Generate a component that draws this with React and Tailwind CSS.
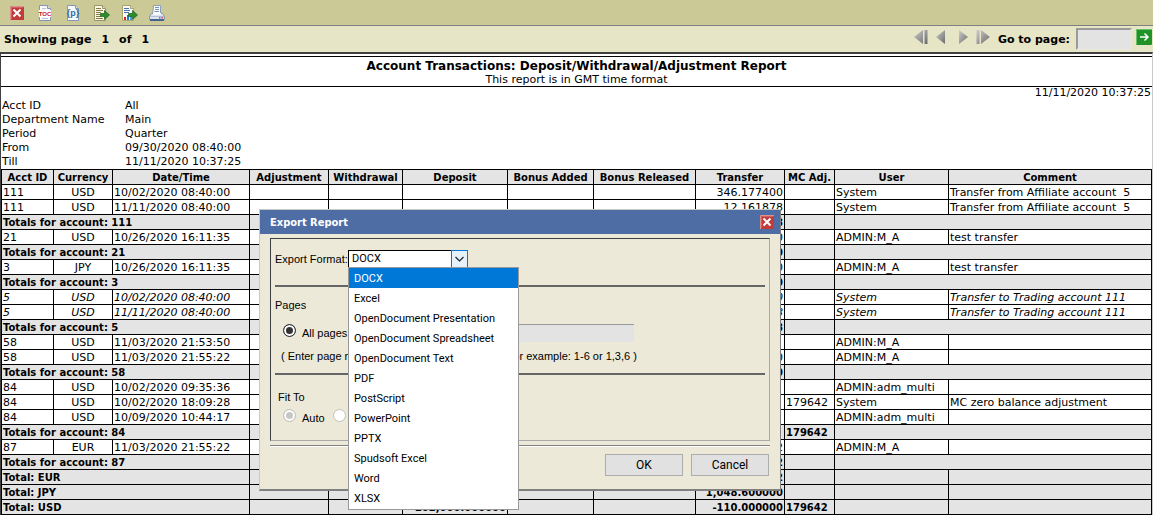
import React, { useState } from 'react';

const formats = [
  'DOCX',
  'Excel',
  'OpenDocument Presentation',
  'OpenDocument Spreadsheet',
  'OpenDocument Text',
  'PDF',
  'PostScript',
  'PowerPoint',
  'PPTX',
  'Spudsoft Excel',
  'Word',
  'XLSX',
];

const headers = [
  'Acct ID', 'Currency', 'Date/Time', 'Adjustment', 'Withdrawal', 'Deposit',
  'Bonus Added', 'Bonus Released', 'Transfer', 'MC Adj.', 'User', 'Comment',
];

const params = [
  ['Acct ID', 'All'],
  ['Department Name', 'Main'],
  ['Period', 'Quarter'],
  ['From', '09/30/2020 08:40:00'],
  ['Till', '11/11/2020 10:37:25'],
];

const accounts = [
  {
    id: '111',
    transfer: '358.339278',
    rows: [
      { currency: 'USD', date: '10/02/2020 08:40:00', transfer: '346.177400', user: 'System', comment: 'Transfer from Affiliate account \u00a05' },
      { currency: 'USD', date: '11/11/2020 08:40:00', transfer: '12.161878', user: 'System', comment: 'Transfer from Affiliate account \u00a05' },
    ],
  },
  {
    id: '21',
    transfer: '10.000000',
    rows: [{ currency: 'USD', date: '10/26/2020 16:11:35', transfer: '10.000000', user: 'ADMIN:M_A', comment: 'test transfer' }],
  },
  {
    id: '3',
    transfer: '1,048.600000',
    rows: [{ currency: 'JPY', date: '10/26/2020 16:11:35', transfer: '1,048.600000', user: 'ADMIN:M_A', comment: 'test transfer' }],
  },
  {
    id: '5',
    transfer: '-358.339278',
    italic: true,
    rows: [
      { currency: 'USD', date: '10/02/2020 08:40:00', transfer: '-346.177400', user: 'System', comment: 'Transfer to Trading account 111' },
      { currency: 'USD', date: '11/11/2020 08:40:00', transfer: '-12.161878', user: 'System', comment: 'Transfer to Trading account 111' },
    ],
  },
  {
    id: '58',
    transfer: '-120.000000',
    rows: [
      { currency: 'USD', date: '11/03/2020 21:53:50', user: 'ADMIN:M_A' },
      { currency: 'USD', date: '11/03/2020 21:55:22', transfer: '-120.000000', user: 'ADMIN:M_A' },
    ],
  },
  {
    id: '84',
    mcAdj: '179642',
    rows: [
      { currency: 'USD', date: '10/02/2020 09:35:36', user: 'ADMIN:adm_multi' },
      { currency: 'USD', date: '10/02/2020 18:09:28', mcAdj: '179642', user: 'System', comment: 'MC zero balance adjustment' },
      { currency: 'USD', date: '10/09/2020 10:44:17', user: 'ADMIN:adm_multi' },
    ],
  },
  {
    id: '87',
    transfer: '102.480132',
    rows: [{ currency: 'EUR', date: '11/03/2020 21:55:22', transfer: '102.480132', user: 'ADMIN:M_A' }],
  },
];

const totals = [
  { currency: 'EUR', transfer: '102.480132' },
  { currency: 'JPY', transfer: '1,048.600000' },
  { currency: 'USD', deposit: '202,000.000000', transfer: '-110.000000', mcAdj: '179642' },
];

const CloseIcon = () => (
  <svg width="16" height="16" viewBox="0 0 16 16">
    <rect x="1" y="1" width="14" height="14" fill="#c13b3b" />
    <path d="M1.5 15V1.5H15" fill="none" stroke="#e08e8e" />
    <path d="M2.5 14V2.5H14" fill="none" stroke="#cf6060" />
    <path d="M4.5 4.5l7 7M11.5 4.5l-7 7" stroke="#fff" strokeWidth="2" />
  </svg>
);

const Sheet = ({ children }) => (
  <>
    <path d="M2.5 .5h8l3 3v12h-11z" fill="#f7f9fc" stroke="#8398b4" />
    <path d="M10.5 .5v3h3" fill="#dbe3ee" stroke="#8398b4" />
    {children}
  </>
);

const TocIcon = () => (
  <svg width="16" height="16" viewBox="0 0 16 16">
    <Sheet>
      <path d="M5 3.5h4M5 13.5h6" stroke="#b9c4d4" />
      <rect x="2" y="5" width="12" height="7" fill="#fff" />
      <text x="8" y="11" textAnchor="middle" fontSize="6" fontWeight="bold" fontFamily="Liberation Sans, sans-serif" fill="#cc1418">TOC</text>
    </Sheet>
  </svg>
);

const ParamsIcon = () => (
  <svg width="16" height="16" viewBox="0 0 16 16">
    <Sheet>
      <text x="8" y="11" textAnchor="middle" fontSize="9" fontWeight="bold" fontFamily="Liberation Sans, sans-serif" fill="#1f6fa8">{'{p}'}</text>
    </Sheet>
  </svg>
);

const GreenArrow = () => (
  <path d="M7.5 8.500h4V5.500l5 4.500-5 4.500v-3h-4z" fill="#2f8a28" stroke="#17631a" strokeWidth=".7" />
);

const ExportDataIcon = () => (
  <svg width="17" height="16" viewBox="0 0 17 16">
    <path d="M1.5 .5h8l3 3v12h-11z" fill="#fbf7e4" stroke="#9b9468" />
    <path d="M9.5 .5v3h3" fill="#e4dcb4" stroke="#9b9468" />
    <path d="M3 3.5h5M3 5.5h7M3 7.5h5M3 9.5h4M3 11.5h5M3 13.5h7" stroke="#857c4a" />
    <GreenArrow />
  </svg>
);

const ExportReportIcon = () => (
  <svg width="17" height="16" viewBox="0 0 17 16">
    <path d="M1.5 .5h8l3 3v12h-11z" fill="#f7f9fc" stroke="#a9a36e" />
    <path d="M9.5 .5v3h3" fill="#e4dcb4" stroke="#a9a36e" />
    <path d="M3 3.5h5M3 5.5h6M3 7.5h5" stroke="#4670ae" />
    <path d="M3 12h2v3H3z" fill="#d22" />
    <path d="M6 10h2v5H6z" fill="#2a6fd0" />
    <path d="M9 11h2v4H9z" fill="#38a0e0" />
    <GreenArrow />
  </svg>
);

const PrintIcon = () => (
  <svg width="16" height="16" viewBox="0 0 16 16">
    <path d="M4.5 .5h7v9h-8z" fill="#f4f7fb" stroke="#8c9db8" />
    <path d="M6 2.5h4M6 4.5h4M5.5 6.5h4.5" stroke="#7f93b2" />
    <path d="M2.500 8.500h11l2 3v3h-15v-3z" fill="#dfe5ee" stroke="#8595af" />
    <path d="M4 8h8v1.500H4z" fill="#fff" />
    <path d="M1 11h14v1H1z" fill="#b4c0d4" />
    <path d="M1 14h14v2H1z" fill="#44628f" />
    <path d="M10 12h1.500v1.500H10z" fill="#2f7fe0" />
    <path d="M12.500 12H14v1.500h-1.500z" fill="#e03c3c" />
  </svg>
);

const NavIcon = ({ width, children }) => (
  <svg width={width} height="14" viewBox={`0 0 ${width} 14`}>
    <defs>
      <linearGradient id="steel" x1="0" y1="0" x2="1" y2="1">
        <stop offset="0" stopColor="#cdcdcd" />
        <stop offset="1" stopColor="#6a6a6a" />
      </linearGradient>
    </defs>
    <g fill="url(#steel)">{children}</g>
  </svg>
);

const GoIcon = () => (
  <svg width="16" height="16" viewBox="0 0 16 16">
    <rect width="16" height="16" rx="1" fill="#1f9326" />
    <path d="M.5 15.5V.5h15" fill="none" stroke="#6cbf70" />
    <path d="M4 8h8M8.500 4.500L12 8l-3.500 3.500" fill="none" stroke="#fff" strokeWidth="1.500" />
  </svg>
);

const tools = [
  { label: 'Close', Icon: CloseIcon },
  { label: 'Toggle table of contents', Icon: TocIcon },
  { label: 'Run report', Icon: ParamsIcon },
  { label: 'Export data', Icon: ExportDataIcon },
  { label: 'Export report', Icon: ExportReportIcon },
  { label: 'Print report', Icon: PrintIcon },
];

const Toolbar = () => (
  <div className="flex h-[26px] items-center border-b border-[#808080] bg-[#cbca96] pl-[3px]">
    {tools.map(({ label, Icon }) => (
      <button key={label} type="button" aria-label={label} className="flex w-7 justify-center">
        <Icon />
      </button>
    ))}
  </div>
);

const Navigation = () => (
  <div className="flex h-[26px] items-center justify-between bg-[#e6e5c5] pl-1 text-[11px] font-bold">
    <div className="flex gap-2.5 pt-[3px]">
      <span>Showing page</span>
      <span>1</span>
      <span>of</span>
      <span>1</span>
    </div>
    <div className="flex items-center">
      <div className="flex items-center pr-2 pb-1">
        <button type="button" aria-label="First page" className="pr-2">
          <NavIcon width={14}>
            <path d="M9 0v14L0 7zM10.500 0h3v14h-3z" />
          </NavIcon>
        </button>
        <button type="button" aria-label="Previous page" className="pr-3.5">
          <NavIcon width={9}>
            <path d="M9 0v14L0 7z" />
          </NavIcon>
        </button>
        <button type="button" aria-label="Next page" className="pr-2">
          <NavIcon width={9}>
            <path d="M0 0v14l9-7z" />
          </NavIcon>
        </button>
        <button type="button" aria-label="Last page">
          <NavIcon width={14}>
            <path d="M5 0v14l9-7zM.5 0h3v14h-3z" />
          </NavIcon>
        </button>
      </div>
      <label htmlFor="gotoPage" className="pt-[3px] pr-1.5">Go to page:</label>
      <input
        id="gotoPage"
        type="text"
        className="h-[22px] w-14 border-2 border-t-[#9a9a9a] border-r-[#e6e6e0] border-b-[#e6e6e0] border-l-[#9a9a9a] bg-[#e3e3e3]"
      />
      <button type="button" aria-label="Go to page" className="pr-px pb-1 pl-1">
        <GoIcon />
      </button>
    </div>
  </div>
);

const cell = 'border border-black px-px pt-0.5 whitespace-nowrap';
const boldCell = 'border border-black px-px pt-0.5 text-left text-[10px] font-bold whitespace-nowrap';
const sumCell = 'border border-black px-px pt-0.5 text-right text-[10px] font-bold';

const ReportTable = () => (
  <table className="w-full table-fixed border-collapse text-[11px] leading-3">
    <colgroup>
      <col className="w-[52px]" />
      <col className="w-[59px]" />
      <col className="w-[137px]" />
      <col className="w-[79px]" />
      <col className="w-[74px]" />
      <col className="w-[105px]" />
      <col className="w-[86px]" />
      <col className="w-[102px]" />
      <col className="w-[89px]" />
      <col className="w-[50px]" />
      <col className="w-[114px]" />
      <col />
    </colgroup>
    <thead>
      <tr className="h-[15px] bg-[#e4e4e4] text-[10px]">
        {headers.map((h) => (
          <th key={h} className="border border-black pt-0.5 font-bold whitespace-nowrap">{h}</th>
        ))}
      </tr>
    </thead>
    <tbody>
      {accounts.map((acct) => (
        <React.Fragment key={acct.id}>
          {acct.rows.map((row, i) => (
            <tr key={i} className={acct.italic ? 'h-[15px] italic' : 'h-[15px]'}>
              <td className={cell}>{acct.id}</td>
              <td className={`${cell} text-center`}>{row.currency}</td>
              <td className={cell}>{row.date}</td>
              <td className={cell} />
              <td className={cell} />
              <td className={cell} />
              <td className={cell} />
              <td className={cell} />
              <td className={`${cell} text-right`}>{row.transfer}</td>
              <td className={cell}>{row.mcAdj}</td>
              <td className={cell}>{row.user}</td>
              <td className={cell}>{row.comment}</td>
            </tr>
          ))}
          <tr className="h-[15px] bg-[#e4e4e4]">
            <th scope="row" colSpan={3} className={boldCell}>Totals for account: {acct.id}</th>
            <td className={cell} />
            <td className={cell} />
            <td className={cell} />
            <td className={cell} />
            <td className={cell} />
            <td className={sumCell}>{acct.transfer}</td>
            <td className={boldCell}>{acct.mcAdj}</td>
            <td colSpan={2} className={cell} />
          </tr>
        </React.Fragment>
      ))}
      {totals.map((t) => (
        <tr key={t.currency} className="h-[15px] bg-[#e4e4e4]">
          <th scope="row" colSpan={3} className={boldCell}>Total: {t.currency}</th>
          <td className={cell} />
          <td className={cell} />
          <td className={sumCell}>{t.deposit}</td>
          <td className={cell} />
          <td className={cell} />
          <td className={sumCell}>{t.transfer}</td>
          <td className={boldCell}>{t.mcAdj}</td>
          <td className={cell} />
          <td className={cell} />
        </tr>
      ))}
    </tbody>
  </table>
);

const Report = () => (
  <main className="border-t-2 border-r border-l border-t-[#404040] border-r-[#c8c8c8] border-l-[#404040] bg-white pt-0.5">
    <div className="border-y border-black text-center">
      <h1 className="pt-0.5 text-[12px] leading-[15px] font-bold">
        Account Transactions: Deposit/Withdrawal/Adjustment Report
      </h1>
      <p className="text-[11px] leading-3">This report is in GMT time format</p>
    </div>
    <p className="pr-px text-right text-[11px] leading-3">11/11/2020 10:37:25</p>
    <dl className="grid grid-cols-[123px_1fr] pl-px text-[11px] leading-[14px]">
      {params.map(([name, value]) => (
        <React.Fragment key={name}>
          <dt>{name}</dt>
          <dd>{value}</dd>
        </React.Fragment>
      ))}
    </dl>
    <ReportTable />
  </main>
);

const Radio = ({ name, label, ...rest }) => (
  <label className="flex items-center gap-1.5 pr-2">
    <input
      type="radio"
      name={name}
      className="mb-1.5 size-[13px] appearance-none rounded-full border border-[#333] bg-white checked:bg-[#333] checked:shadow-[inset_0_0_0_2px_#fff] disabled:border-[#c4c2b8] disabled:checked:bg-[#c6c6c6]"
      {...rest}
    />
    {label}
  </label>
);

const ExportDialog = ({ onClose }) => {
  const [format, setFormat] = useState('DOCX');
  const [open, setOpen] = useState(true);
  const [pages, setPages] = useState('all');

  const pick = (value) => {
    setFormat(value);
    setOpen(false);
  };

  return (
    <div
      role="dialog"
      aria-label="Export Report"
      className="absolute top-[209px] left-[259px] w-[522px] border border-t-[#c9c9c9] border-r-[#808080] border-b-2 border-b-[#808080] border-l-[#c9c9c9] bg-[#ece9d8] font-['Liberation_Sans',sans-serif] text-[11px] leading-4"
    >
      <div className="flex h-6 items-center justify-between bg-[#4e6da4] pr-[5px] pl-2.5">
        <h2 className="pt-0.5 font-bold text-white font-['DejaVu_Sans_Condensed','DejaVu_Sans',sans-serif]">Export Report</h2>
        <button type="button" aria-label="Close dialog" onClick={onClose}>
          <CloseIcon />
        </button>
      </div>

      <div className="px-2.5 pt-1">
        <div className="h-[203px] border border-t-[#404040] border-r-[#aaa] border-b-[#aaa] border-l-[#404040] px-1 pt-[11px]">
          <div className="flex h-[18px] items-center">
            <label htmlFor="exportFormat" className="w-[73px] whitespace-nowrap">Export Format:</label>
            <div className="relative h-[18px] w-[120px] font-['Roboto',sans-serif]">
              <select
                id="exportFormat"
                value={format}
                onChange={(e) => setFormat(e.target.value)}
                className="h-[18px] w-full appearance-none border border-black bg-white pl-[3px]"
              >
                {formats.map((f) => (
                  <option key={f}>{f}</option>
                ))}
              </select>
              <span className="pointer-events-none absolute top-0 right-0 flex h-[18px] w-[17px] items-center justify-center border border-[#0078d7] bg-[#e5f1fb]">
                <svg width="9" height="6" viewBox="0 0 9 6">
                  <path d="M.5 1l4 4 4-4" fill="none" stroke="#222" strokeWidth="1.200" />
                </svg>
              </span>
              {open && (
                <ul role="listbox" aria-label="Export Format" className="absolute top-[17px] left-0 z-10 w-[171px] border border-[#999] bg-white pb-px">
                  {formats.map((f) => (
                    <li
                      key={f}
                      role="option"
                      aria-selected={f === format}
                      onClick={() => pick(f)}
                      className={f === format ? 'h-5 bg-[#0078d7] pl-[5px] leading-[22px] text-white' : 'h-5 pl-[5px] leading-[22px]'}
                    >
                      {f}
                    </li>
                  ))}
                </ul>
              )}
            </div>
          </div>

          <hr className="mt-[17px] border-t-2 border-[#666]" />

          <p className="pt-2.5">Pages</p>
          <div className="mt-[11px] flex h-[18px] items-center pl-2">
            <Radio name="pages" label="All pages" checked={pages === 'all'} onChange={() => setPages('all')} />
            <Radio name="pages" label="Current page" checked={pages === 'current'} onChange={() => setPages('current')} />
            <Radio name="pages" label="Pages:" checked={pages === 'range'} onChange={() => setPages('range')} />
            <input
              type="text"
              aria-label="Page range"
              disabled
              className="mr-[131px] h-[18px] min-w-0 flex-1 border-t border-[#999] bg-[#e3e3e3]"
            />
          </div>
          <p className="pt-1.5 pl-1.5">( Enter page number(s) and/or page range(s). For example: 1-6 or 1,3,6 )</p>

          <hr className="mt-[9px] border-t-2 border-[#666]" />

          <p className="pt-3.5 pl-[3px]">Fit To</p>
          <div className="mt-1 flex h-[18px] items-center pl-2">
            <Radio name="fit" label="Auto" defaultChecked disabled />
            <Radio name="fit" label="Actual size" disabled />
            <Radio name="fit" label="Fit to whole page" disabled />
          </div>
        </div>

        <hr className="mt-1 border-t border-[#808080]" />
        <div className="flex justify-end gap-2 border-t border-white pt-[7px] pr-px pb-[13px] font-['Roboto',sans-serif] text-[12px]">
          <button type="button" className="h-[22px] w-[78px] border border-[#adadad] bg-[#e1e1e1]">OK</button>
          <button type="button" onClick={onClose} className="h-[22px] w-[78px] border border-[#adadad] bg-[#e1e1e1]">Cancel</button>
        </div>
      </div>
    </div>
  );
};

export default function App() {
  const [showExport, setShowExport] = useState(true);

  return (
    <div className="relative min-h-screen bg-white text-black font-['DejaVu_Sans',sans-serif]">
      <Toolbar />
      <Navigation />
      <Report />
      {showExport && <ExportDialog onClose={() => setShowExport(false)} />}
    </div>
  );
}
